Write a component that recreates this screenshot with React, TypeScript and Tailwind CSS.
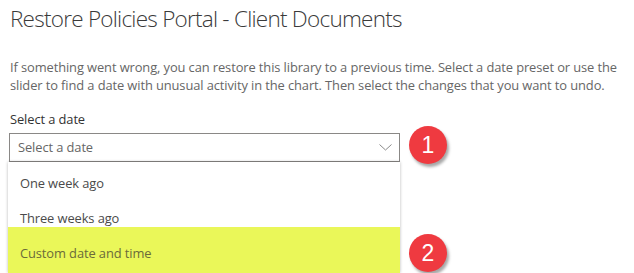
export default function App() {
  return (
    <div className="w-[634px] h-[273px] bg-white overflow-hidden pl-[9px] pt-[4px] font-['Open_Sans',sans-serif]">
      <h1 className="font-light text-[22.5px] leading-[30px] text-[#3a3a3a] pl-[1px] tracking-[-0.75px]">
        Restore Policies Portal - Client Documents
      </h1>
      <p className="mt-[24px] text-[12.9px] leading-[18px] text-[#666] pl-[1px] tracking-[-0.1px] w-[622px]">
        If something went wrong, you can restore this library to a previous time. Select a date preset or use the slider to find a date with unusual activity in the chart. Then select the changes that you want to undo.
      </p>
      <div className="mt-[16px] text-[12.9px] leading-[18px] text-[#333] pl-[1px] tracking-[-0.1px]">Select a date</div>
      <div className="relative mt-[5px] w-[392px]">
        <div className="w-[391px] h-[29px] border border-[#8a8886] flex items-center justify-between pl-[8px] pr-[7px]">
          <span className="text-[12.9px] text-[#666] tracking-[-0.1px]">Select a date</span>
          <svg width="13" height="7" viewBox="0 0 13 7" fill="none">
            <polyline points="0.5,0.5 6.5,6 12.5,0.5" stroke="#8a8a8a" strokeWidth="1" />
          </svg>
        </div>
        <div className="-ml-[1px] w-[392px] bg-white shadow-[0_0_3px_rgba(0,0,0,0.28)] text-[12.9px] leading-[18px] text-[#4a4a4a] tracking-[-0.1px]">
          <div className="pl-[12px] pt-[12px] pb-[9px]">One week ago</div>
          <div className="pl-[12px] pt-[8px]">Three weeks ago</div>
          <div className="pl-[12px] pt-[17px] pb-[11px] bg-[#eaf759] text-[#6b6a3a]">Custom date and time</div>
        </div>
        <div className="absolute left-[400px] top-[-7px] w-[38px] h-[38px] rounded-full bg-[#ef3a40] shadow-[2px_3px_3px_rgba(0,0,0,0.35)] flex items-center justify-center text-white text-[23px] font-['Liberation_Sans',sans-serif]">
          1
        </div>
        <div className="absolute left-[400px] top-[101px] w-[38px] h-[38px] rounded-full bg-[#ef3a40] shadow-[2px_3px_3px_rgba(0,0,0,0.35)] flex items-center justify-center text-white text-[23px] font-['Liberation_Sans',sans-serif]">
          2
        </div>
      </div>
    </div>
  );
}
